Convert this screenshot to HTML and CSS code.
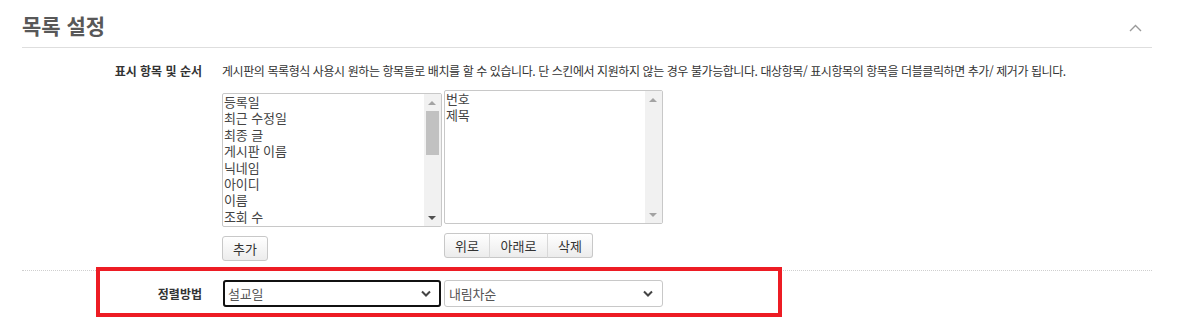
FILE: index.html
```html
<!DOCTYPE html>
<html lang="ko">
<head>
<meta charset="utf-8">
<title>목록 설정</title>
<link rel="stylesheet" href="styles.css">
</head>
<body>
<div class="panel">
  <div class="head">
    <h2 class="title">목록 설정</h2>
    <span class="toggle"><svg width="13" height="8" viewBox="0 0 13 8"><path d="M1 7 L6.5 1.5 L12 7" fill="none" stroke="#9a9a9a" stroke-width="1.4"/></svg></span>
  </div>

  <div class="row row-list">
    <div class="label">표시 항목 및 순서</div>
    <div class="field">
      <p class="desc">게시판의 목록형식 사용시 원하는 항목들로 배치를 할 수 있습니다. 단 스킨에서 지원하지 않는 경우 불가능합니다. 대상항목/ 표시항목의 항목을 더블클릭하면 추가/ 제거가 됩니다.</p>
      <div class="lists">
        <div class="col col-a">
          <div class="listbox">
            <ul class="items">
              <li>등록일</li>
              <li>최근 수정일</li>
              <li>최종 글</li>
              <li>게시판 이름</li>
              <li>닉네임</li>
              <li>아이디</li>
              <li>이름</li>
              <li>조회 수</li>
            </ul>
            <div class="scrollbar">
              <span class="arr up dim"></span>
              <span class="thumb"></span>
              <span class="arr down"></span>
            </div>
          </div>
          <div class="btns"><button class="btn w46">추가</button></div>
        </div>
        <div class="col col-b">
          <div class="listbox">
            <ul class="items">
              <li>번호</li>
              <li>제목</li>
            </ul>
            <div class="scrollbar">
              <span class="arr up dim"></span>
              <span class="arr down dim"></span>
            </div>
          </div>
          <div class="btns group">
            <button class="btn w46">위로</button><button class="btn w59">아래로</button><button class="btn w46">삭제</button>
          </div>
        </div>
      </div>
    </div>
  </div>

  <div class="row row-sort">
    <div class="label">정렬방법</div>
    <div class="field selects">
      <div class="select focus"><span>설교일</span><svg class="chev" width="10" height="7" viewBox="0 0 10 7"><path d="M1 1.5 L5 5.5 L9 1.5" fill="none" stroke="#444" stroke-width="2"/></svg></div>
      <div class="select"><span>내림차순</span><svg class="chev" width="10" height="7" viewBox="0 0 10 7"><path d="M1 1.5 L5 5.5 L9 1.5" fill="none" stroke="#444" stroke-width="2"/></svg></div>
    </div>
  </div>

  <div class="highlight"></div>
</div>
</body>
</html>
```

FILE: styles.css
```css
* { box-sizing: border-box; }
html, body { margin: 0; padding: 0; background: #fff; }
body {
  font-family: "Noto Sans CJK KR", "Noto Sans", sans-serif;
  color: #333;
  width: 1185px;
  height: 318px;
  overflow: hidden;
}
.panel {
  position: relative;
  margin-left: 22px;
  width: 1130px;
}
.head {
  display: flex;
  align-items: center;
  justify-content: space-between;
  height: 48px;
  padding-top: 3px;
  border-bottom: 1px solid #dedede;
}
.title {
  margin: 0;
  font-size: 21px;
  font-weight: bold;
  color: #585858;
  letter-spacing: 0;
  line-height: 28px;
}
.toggle {
  display: flex;
  margin-right: 10px;
  margin-top: 6px;
}
.row {
  display: flex;
}
.label {
  width: 180px;
  flex: none;
  text-align: right;
  font-size: 12px;
  font-weight: bold;
  color: #333;
  letter-spacing: 0;
}
.field { margin-left: 20px; }
.row-list {
  padding-top: 14px;
  padding-bottom: 9px;
  border-bottom: 1px dotted #cfcfcf;
}
.row-list .label { line-height: 18px; }
.desc {
  margin: 0;
  font-size: 12px;
  line-height: 18px;
  letter-spacing: -0.42px;
  color: #333;
  white-space: nowrap;
}
.lists {
  display: flex;
  gap: 2px;
  margin-top: 10px;
}
.col-a { padding-top: 3px; }
.listbox {
  position: relative;
  display: flex;
  height: 134px;
  border: 1px solid #c8c8c8;
  border-radius: 2px;
  background: #fff;
}
.col-a .listbox { width: 220px; }
.col-b .listbox { width: 219px; }
.items {
  list-style: none;
  margin: 0;
  padding: 0 0 0 1px;
  flex: 1;
  font-size: 13px;
  line-height: 16.4px;
  color: #444;
  letter-spacing: -0.1px;
}
.scrollbar {
  position: relative;
  width: 17px;
  background: #f1f1f1;
}
.thumb {
  position: absolute;
  left: 2px;
  right: 2px;
  top: 17px;
  height: 44px;
  background: #c1c1c1;
}
.arr {
  position: absolute;
  left: 4px;
  width: 0;
  height: 0;
  border-left: 4px solid transparent;
  border-right: 4px solid transparent;
}
.arr.up { top: 7px; border-bottom: 4px solid #505050; }
.arr.down { bottom: 6px; border-top: 4px solid #505050; }
.arr.up.dim { border-bottom-color: #a3a3a3; }
.arr.down.dim { border-top-color: #a3a3a3; }
.btns {
  display: flex;
  margin-top: 9px;
}
.btn {
  font-family: inherit;
  font-size: 13px;
  color: #333;
  height: 25px;
  line-height: 23px;
  padding: 0;
  text-align: center;
  border: 1px solid #c8c8c8;
  border-radius: 3px;
  background: linear-gradient(#fff, #ececec);
  letter-spacing: 0;
  margin: 0;
}
.w46 { width: 46px; }
.w59 { width: 59px; }
.group .btn { border-radius: 0; }
.group .btn:first-child { border-radius: 3px 0 0 3px; }
.group .btn:last-child { border-radius: 0 3px 3px 0; }
.group .btn:not(:first-child) { border-left: 1px solid #d8d8d8; margin-left: -1px; }
.row-sort {
  padding-top: 9px;
  align-items: center;
}
.row-sort .label { line-height: 27px; }
.selects {
  display: flex;
  gap: 3px;
  margin-left: 21px;
}
.select {
  position: relative;
  display: flex;
  align-items: center;
  justify-content: space-between;
  height: 27px;
  border: 1px solid #c8c8c8;
  border-radius: 3px;
  padding: 0 9px 0 4px;
  font-size: 13px;
  color: #555;
  letter-spacing: -0.2px;
}
.select:first-child { width: 218px; }
.select:last-child { width: 219px; padding-left: 4px; }
.select.focus {
  outline: 2px solid #111;
  outline-offset: -2px;
}
.highlight {
  position: absolute;
  left: 74px;
  top: 267px;
  width: 686px;
  height: 50px;
  border: 4px solid #ed1c24;
  pointer-events: none;
}
```
